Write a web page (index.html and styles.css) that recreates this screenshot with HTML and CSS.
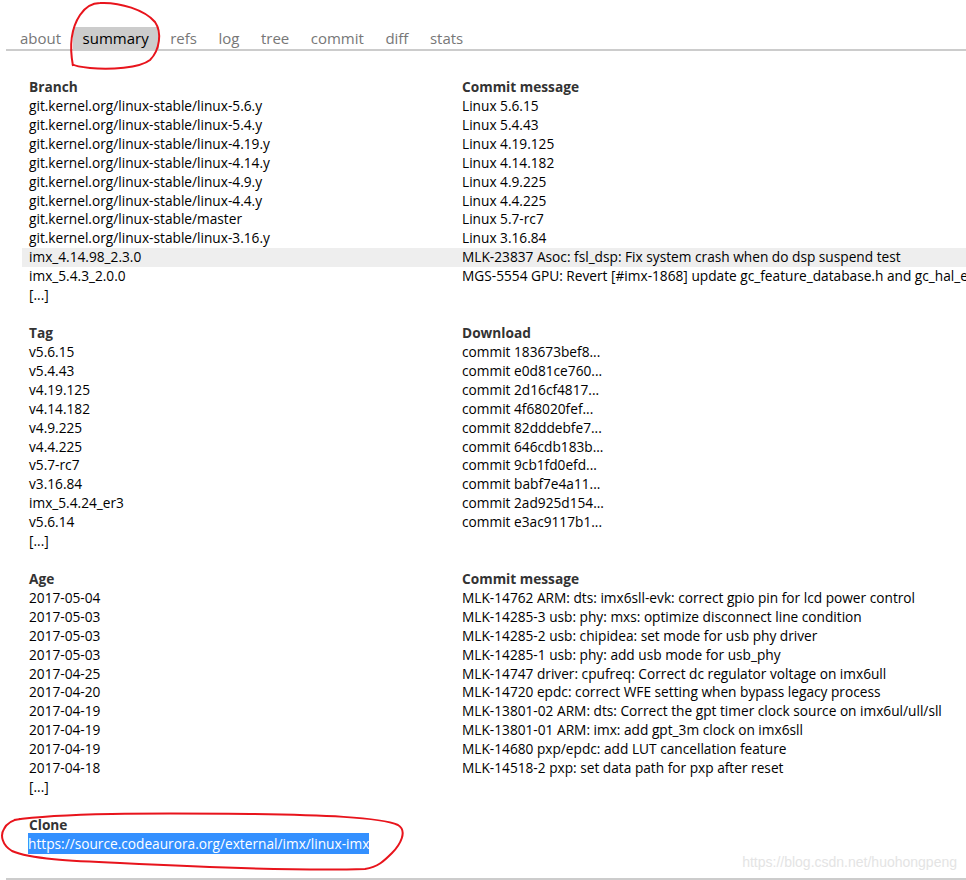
FILE: index.html
```html
<!DOCTYPE html>
<html>
<head>
<meta charset="utf-8">
<link rel="stylesheet" href="styles.css">
</head>
<body>
<div class="page">
  <div class="tabs">
    <a class="tab">about</a>
    <a class="tab active">summary</a>
    <a class="tab">refs</a>
    <a class="tab">log</a>
    <a class="tab">tree</a>
    <a class="tab">commit</a>
    <a class="tab">diff</a>
    <a class="tab">stats</a>
  </div>
  <div class="content">
    <table class="list">
      <colgroup><col class="c1"><col class="c2"></colgroup>
      <tr class="head"><th>Branch</th><th>Commit message</th></tr>
      <tr><td>git.kernel.org/linux-stable/linux-5.6.y</td><td>Linux 5.6.15</td></tr>
      <tr><td>git.kernel.org/linux-stable/linux-5.4.y</td><td>Linux 5.4.43</td></tr>
      <tr><td>git.kernel.org/linux-stable/linux-4.19.y</td><td>Linux 4.19.125</td></tr>
      <tr><td>git.kernel.org/linux-stable/linux-4.14.y</td><td>Linux 4.14.182</td></tr>
      <tr><td>git.kernel.org/linux-stable/linux-4.9.y</td><td>Linux 4.9.225</td></tr>
      <tr><td>git.kernel.org/linux-stable/linux-4.4.y</td><td>Linux 4.4.225</td></tr>
      <tr><td>git.kernel.org/linux-stable/master</td><td>Linux 5.7-rc7</td></tr>
      <tr><td>git.kernel.org/linux-stable/linux-3.16.y</td><td>Linux 3.16.84</td></tr>
      <tr class="hover"><td>imx_4.14.98_2.3.0</td><td>MLK-23837 Asoc: fsl_dsp: Fix system crash when do dsp suspend test</td></tr>
      <tr><td>imx_5.4.3_2.0.0</td><td>MGS-5554 GPU: Revert [#imx-1868] update gc_feature_database.h and gc_hal_eglplatform.h</td></tr>
      <tr><td>[...]</td><td></td></tr>
      <tr class="gap"><td></td><td></td></tr>
      <tr class="head"><th>Tag</th><th>Download</th></tr>
      <tr><td>v5.6.15</td><td>commit 183673bef8...</td></tr>
      <tr><td>v5.4.43</td><td>commit e0d81ce760...</td></tr>
      <tr><td>v4.19.125</td><td>commit 2d16cf4817...</td></tr>
      <tr><td>v4.14.182</td><td>commit 4f68020fef...</td></tr>
      <tr><td>v4.9.225</td><td>commit 82dddebfe7...</td></tr>
      <tr><td>v4.4.225</td><td>commit 646cdb183b...</td></tr>
      <tr><td>v5.7-rc7</td><td>commit 9cb1fd0efd...</td></tr>
      <tr><td>v3.16.84</td><td>commit babf7e4a11...</td></tr>
      <tr><td>imx_5.4.24_er3</td><td>commit 2ad925d154...</td></tr>
      <tr><td>v5.6.14</td><td>commit e3ac9117b1...</td></tr>
      <tr><td>[...]</td><td></td></tr>
      <tr class="gap"><td></td><td></td></tr>
      <tr class="head"><th>Age</th><th>Commit message</th></tr>
      <tr><td>2017-05-04</td><td>MLK-14762 ARM: dts: imx6sll-evk: correct gpio pin for lcd power control</td></tr>
      <tr><td>2017-05-03</td><td>MLK-14285-3 usb: phy: mxs: optimize disconnect line condition</td></tr>
      <tr><td>2017-05-03</td><td>MLK-14285-2 usb: chipidea: set mode for usb phy driver</td></tr>
      <tr><td>2017-05-03</td><td>MLK-14285-1 usb: phy: add usb mode for usb_phy</td></tr>
      <tr><td>2017-04-25</td><td>MLK-14747 driver: cpufreq: Correct dc regulator voltage on imx6ull</td></tr>
      <tr><td>2017-04-20</td><td>MLK-14720 epdc: correct WFE setting when bypass legacy process</td></tr>
      <tr><td>2017-04-19</td><td>MLK-13801-02 ARM: dts: Correct the gpt timer clock source on imx6ul/ull/sll</td></tr>
      <tr><td>2017-04-19</td><td>MLK-13801-01 ARM: imx: add gpt_3m clock on imx6sll</td></tr>
      <tr><td>2017-04-19</td><td>MLK-14680 pxp/epdc: add LUT cancellation feature</td></tr>
      <tr><td>2017-04-18</td><td>MLK-14518-2 pxp: set data path for pxp after reset</td></tr>
      <tr><td>[...]</td><td></td></tr>
      <tr class="gap"><td></td><td></td></tr>
      <tr class="head"><th>Clone</th><th></th></tr>
      <tr><td colspan="2"><span class="selected">https://source.codeaurora.org/external/imx/linux-imx</span></td></tr>
    </table>
  </div>
  <div class="footer"></div>
  <div class="watermark">https://blog.csdn.net/huohongpeng</div>
  <svg class="mark mark-summary" width="110" height="75" viewBox="0 0 110 75">
    <path d="M13 66 C10 50 10 30 20 15 C26 6 32 3 40 3 C60 2 85 10 95 22 C102 32 100 50 90 60 C80 68 50 70 30 68 C20 67 15 66 12 64" fill="none" stroke="#e8141c" stroke-width="2"/>
  </svg>
  <svg class="mark mark-clone" width="412" height="72" viewBox="0 0 412 72">
    <path d="M14 15 C60 8 150 8 250 9 C320 10 380 12 398 20 C408 26 400 40 392 48 C384 56 378 62 365 64 C300 66 200 62 120 58 C70 56 30 54 12 46 C2 40 0 30 4 24 C7 18 12 15 20 14" fill="none" stroke="#e8141c" stroke-width="2"/>
  </svg>
</div>
</body>
</html>
```

FILE: styles.css
```css
html, body {
  margin: 0;
  padding: 0;
  background: #fff;
}
.page {
  position: relative;
  width: 966px;
  height: 880px;
  overflow: hidden;
  font-family: "Open Sans", "Noto Sans", sans-serif;
  color: #000;
}
.tabs {
  display: flex;
  margin: 27px 0 0 6px;
  padding-left: 4px;
  border-bottom: 2px solid #ccc;
  gap: 1.5px;
}
.tab {
  display: block;
  padding: 0 10px;
  height: 22px;
  line-height: 22px;
  font-size: 15px;
  color: #777;
}
.tab.active {
  background: #ccc;
  color: #000;
}
.content {
  margin-top: 27px;
  padding-left: 22px;
}
.list {
  border-collapse: collapse;
  table-layout: fixed;
  width: 1400px;
  font-size: 13.7px;
  white-space: nowrap;
}
.list col.c1 {
  width: 433px;
}
.list th, .list td {
  height: 18.92px;
  padding: 0 7px;
  text-align: left;
  vertical-align: middle;
  line-height: 18.92px;
  overflow: visible;
}
.list th {
  font-weight: bold;
  color: #333;
}
.list tr.hover td {
  background: #eee;
}
.selected {
  background: #3390ff;
  color: #fff;
  padding: 1px 0;
  margin-left: -1px;
}
.footer {
  margin: 24px 0 0 6px;
  border-top: 2px solid #ccc;
}
.watermark {
  position: absolute;
  right: 9px;
  bottom: 10px;
  font-family: "Liberation Sans", Arial, sans-serif;
  font-size: 14px;
  color: #e4e4e4;
}
.mark {
  position: absolute;
}
.mark-summary {
  left: 60px;
  top: 0;
}
.mark-clone {
  left: 0;
  top: 805px;
}
```
